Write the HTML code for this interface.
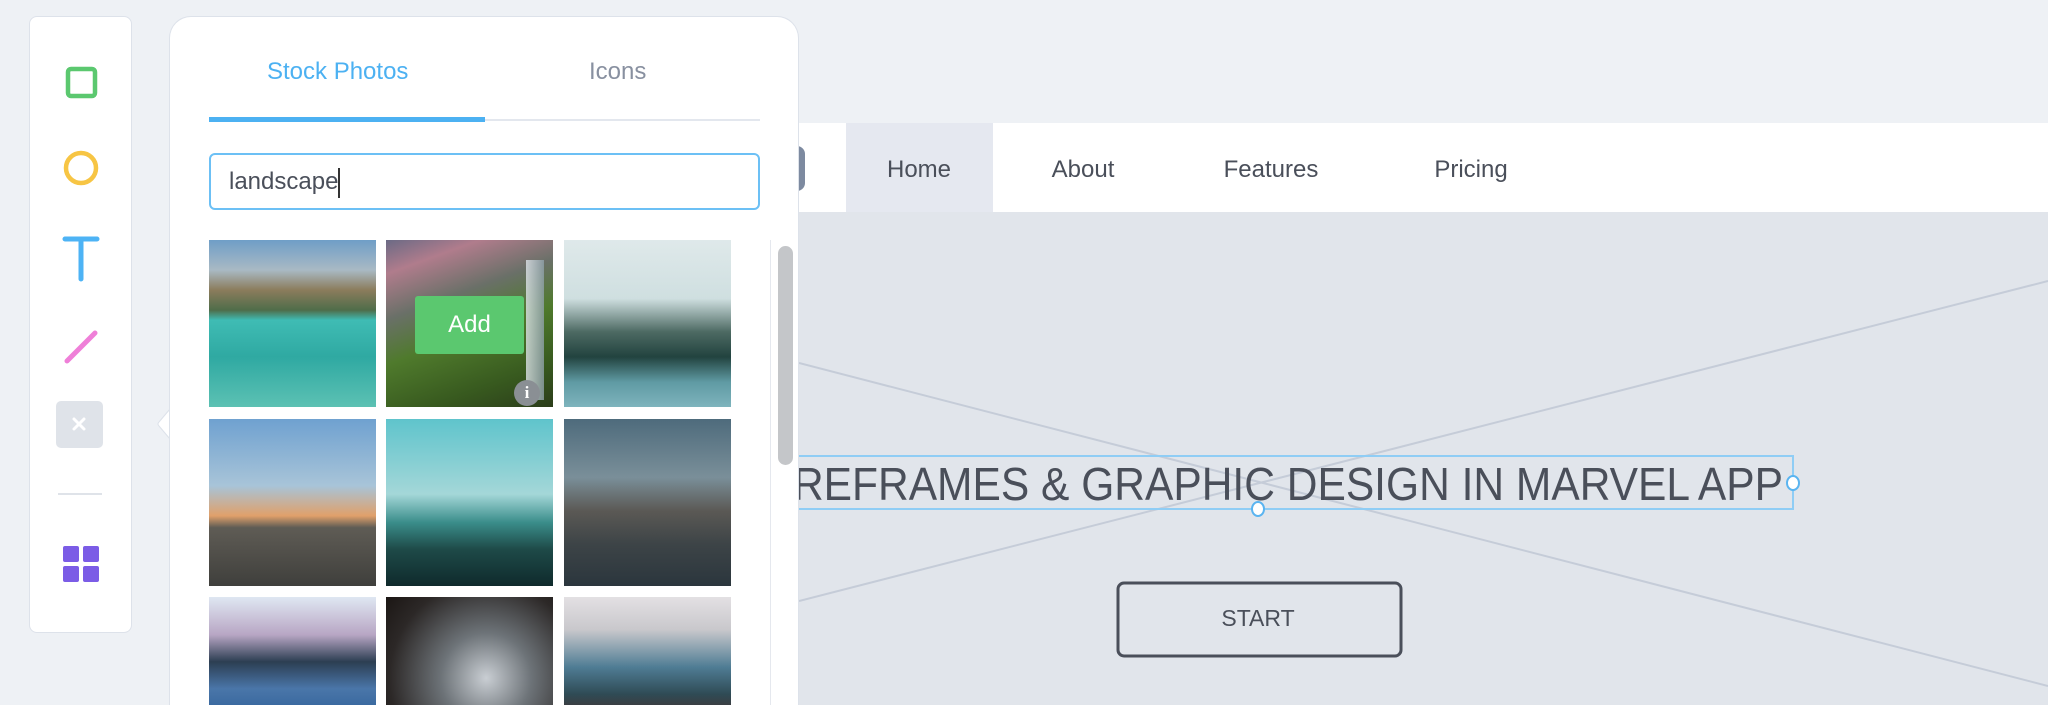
<!DOCTYPE html>
<html><head><meta charset="utf-8"><style>
*{box-sizing:border-box;margin:0;padding:0}
html,body{width:2048px;height:705px;overflow:hidden}
body{background:#eef1f5;position:relative;font-family:"Liberation Sans",sans-serif}
.abs{position:absolute}
#nav{left:799px;top:123px;width:1249px;height:89px;background:#fff}
#canvas{left:799px;top:212px;width:1249px;height:493px;background:#e1e5eb;overflow:hidden}
.nv{position:absolute;top:2px;height:89px;line-height:89px;font-size:24px;color:#4a4f5a;transform:translateX(-50%)}
#tool{left:29px;top:16px;width:103px;height:617px;background:#fff;border:1px solid #dde2ea;border-radius:8px}
#panel{left:169px;top:16px;width:630px;height:689px;background:#fff;border:1px solid #dde2ea;border-bottom:none;border-radius:22px 22px 0 0;overflow:hidden}
.img{position:absolute;width:167px;height:167px}
.img.last{height:108px}
</style></head><body>
<div id="nav" class="abs">
  <div class="abs" style="left:47px;top:0;width:147px;height:89px;background:#e5e8f0"></div>
  <div class="nv" style="left:120px">Home</div>
  <div class="nv" style="left:284px">About</div>
  <div class="nv" style="left:472px">Features</div>
  <div class="nv" style="left:672px">Pricing</div>
  <div class="abs" style="left:-10px;top:23px;width:16px;height:45px;border-radius:0 8px 8px 0;background:#7d8aa0"></div>
</div>
<div id="canvas" class="abs">
<svg width="1249" height="493" style="position:absolute;left:0;top:0">
  <line x1="0" y1="151" x2="1249" y2="474" stroke="#c5ccd8" stroke-width="2"/>
  <line x1="0" y1="389" x2="1249" y2="69" stroke="#c5ccd8" stroke-width="2"/>
  <text x="-58" y="288" font-family="Liberation Sans" font-size="46" fill="#4a4f5a" textLength="1042" lengthAdjust="spacingAndGlyphs">WIREFRAMES &amp; GRAPHIC DESIGN IN MARVEL APP</text>
  <rect x="-5" y="244" width="999" height="53" fill="none" stroke="#8fcdf5" stroke-width="2"/>
  <ellipse cx="994" cy="271" rx="6" ry="7" fill="#fff" stroke="#5ab4f0" stroke-width="2"/>
  <ellipse cx="459" cy="297" rx="6" ry="7" fill="#fff" stroke="#5ab4f0" stroke-width="2"/>
  <rect x="319" y="371" width="283" height="73" rx="6" fill="none" stroke="#4a4f5a" stroke-width="3"/>
  <text x="459" y="414" font-family="Liberation Sans" font-size="23" fill="#4a4f5a" text-anchor="middle">START</text>
</svg>
</div>
<div id="tool" class="abs">
<svg width="103" height="617" style="position:absolute;left:-1px;top:-1px">
  <rect x="39" y="53" width="27" height="27" rx="3" fill="none" stroke="#5bc86f" stroke-width="4.5"/>
  <circle cx="52" cy="152" r="15" fill="none" stroke="#f7c544" stroke-width="4.5"/>
  <path d="M36 223H68M52 223V263" stroke="#4db3f5" stroke-width="5" stroke-linecap="round" fill="none"/>
  <path d="M38 345L66 317" stroke="#ef7fd8" stroke-width="5" stroke-linecap="round"/>
  <rect x="27" y="385" width="47" height="47" rx="5" fill="#dfe3e9"/>
  <path d="M45 403L55 413M55 403L45 413" stroke="#fff" stroke-width="3" stroke-linecap="round"/>
  <line x1="29" y1="478" x2="73" y2="478" stroke="#dfe3e9" stroke-width="2"/>
  <rect x="34" y="530" width="16" height="16" rx="2" fill="#7b5ce6"/>
  <rect x="54" y="530" width="16" height="16" rx="2" fill="#7b5ce6"/>
  <rect x="34" y="550" width="16" height="16" rx="2" fill="#7b5ce6"/>
  <rect x="54" y="550" width="16" height="16" rx="2" fill="#7b5ce6"/>
</svg>
</div>
<svg class="abs" style="left:156px;top:408px" width="16" height="32"><path d="M15 0L3 14Q1 16 3 18L15 32Z" fill="#fff"/><path d="M14 1L3 14Q1 16 3 18L14 31" fill="none" stroke="#dde2ea" stroke-width="1"/></svg>
<div id="panel" class="abs">
  <div class="abs" style="left:97px;top:41px;white-space:nowrap;font-size:24px;color:#4cb1f2">Stock Photos</div>
  <div class="abs" style="left:419px;top:41px;font-size:24px;color:#8890a0">Icons</div>
  <div class="abs" style="left:39px;top:102px;width:551px;height:2px;background:#e3e7ee"></div>
  <div class="abs" style="left:39px;top:100px;width:276px;height:5px;background:#4cb1f2"></div>
  <div class="abs" style="left:39px;top:136px;width:551px;height:57px;border:2px solid #6cc0f5;border-radius:6px;font-size:24px;color:#4a4f5a;line-height:53px;padding-left:18px">landscape<span style="display:inline-block;width:2px;height:30px;background:#333;vertical-align:middle"></span></div>
  <div class="abs" style="left:600px;top:223px;width:1px;height:465px;background:#e5e8ee"></div>
  <div class="abs" style="left:608px;top:229px;width:15px;height:219px;border-radius:8px;background:#c4c6c9"></div>
  <div class="img" style="left:39px;top:223px;background:linear-gradient(#6f9ec7 0%,#a9b9c4 18%,#8b7c5c 30%,#4f6d4a 42%,#3fbcb4 48%,#2fa9a2 70%,#5cc1b3 100%)"></div>
  <div class="img" style="left:216px;top:223px;background:linear-gradient(160deg,#6b6a85 0%,#b07c8c 15%,#6a7068 35%,#4f7a2c 55%,#385a1f 80%,#2b3d1a 100%)">
    <div class="abs" style="left:140px;top:20px;width:18px;height:140px;background:linear-gradient(90deg,#dfe5ea,#8ea0a8);opacity:.8"></div>
    <div class="abs" style="left:29px;top:56px;width:109px;height:58px;background:#5bc86f;border-radius:3px;color:#fff;font-size:24px;text-align:center;line-height:58px">Add</div>
    <div class="abs" style="left:128px;top:140px;width:26px;height:26px;border-radius:50%;background:#8a8f94;color:#fff;font:bold 17px 'Liberation Serif',serif;text-align:center;line-height:26px">i</div>
  </div>
  <div class="img" style="left:394px;top:223px;background:linear-gradient(#dfe9ea 0%,#cfdfe0 35%,#4d6a63 55%,#22433f 70%,#5f9aa3 85%,#7eb4bd 100%)"></div>
  <div class="img" style="left:39px;top:402px;background:linear-gradient(#6fa1d0 0%,#a8c4d8 40%,#e0a06a 58%,#5f5c55 65%,#3f3f3c 100%)"></div>
  <div class="img" style="left:216px;top:402px;background:linear-gradient(#5fc4cc 0%,#a4d7d8 45%,#3a8d8a 62%,#1e4a48 78%,#0f2a2c 100%)"></div>
  <div class="img" style="left:394px;top:402px;background:linear-gradient(#4e6b7c 0%,#7a8f99 35%,#5b5955 55%,#3d4447 75%,#2b363d 100%)"></div>
  <div class="img last" style="left:39px;top:580px;background:linear-gradient(#dfe7f2 0%,#b8a6c4 35%,#2c3e52 60%,#4a76a9 85%,#3b6aa0 100%)"></div>
  <div class="img last" style="left:216px;top:580px;background:radial-gradient(circle at 60% 75%,#c9ced3 0%,#6d7378 35%,#2c2827 75%,#1b1614 100%)"></div>
  <div class="img last" style="left:394px;top:580px;background:linear-gradient(#e3e0e3 0%,#c9c8cc 30%,#4f7c94 65%,#2f4b55 90%,#3a3f43 100%)"></div>
</div>
</body></html>
